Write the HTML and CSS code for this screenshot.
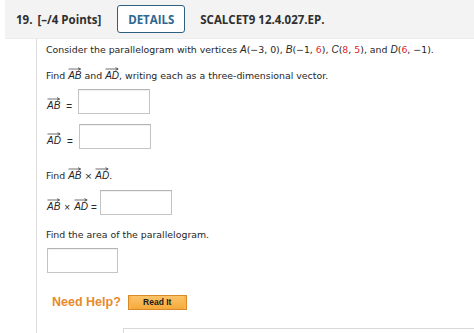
FILE: index.html
```html
<!DOCTYPE html>
<html>
<head>
<meta charset="utf-8">
<link rel="stylesheet" href="styles.css">
</head>
<body>
<div class="header">
  <span class="qnum">19.</span>
  <span class="points">[–/4 Points]</span>
  <span class="details">DETAILS</span>
  <span class="code">SCALCET9 12.4.027.EP.</span>
</div>
<div class="content">
  <p class="line first">Consider the parallelogram with vertices <i>A</i>(−3, 0), <i>B</i>(−1, <span class="red">6</span>), <i>C</i>(<span class="red">8</span>, <span class="red">5</span>), and <i>D</i>(<span class="red">6</span>, −1).</p>
  <p class="line l2">Find <span class="vec">AB<svg viewBox="0 0 14 5" preserveAspectRatio="none"><path d="M0.5 2.5H13M10.5 0.8L13.3 2.5L10.5 4.2" fill="none" stroke="#333" stroke-width="0.8"/></svg></span> and <span class="vec">AD<svg viewBox="0 0 14 5" preserveAspectRatio="none"><path d="M0.5 2.5H13M10.5 0.8L13.3 2.5L10.5 4.2" fill="none" stroke="#333" stroke-width="0.8"/></svg></span>, writing each as a three-dimensional vector.</p>
  <div class="row r1">
    <span class="vec">AB<svg viewBox="0 0 14 5" preserveAspectRatio="none"><path d="M0.5 2.5H13M10.5 0.8L13.3 2.5L10.5 4.2" fill="none" stroke="#333" stroke-width="0.8"/></svg></span><span class="eq">=</span><span class="box"></span>
  </div>
  <div class="row r2">
    <span class="vec">AD<svg viewBox="0 0 14 5" preserveAspectRatio="none"><path d="M0.5 2.5H13M10.5 0.8L13.3 2.5L10.5 4.2" fill="none" stroke="#333" stroke-width="0.8"/></svg></span><span class="eq">=</span><span class="box"></span>
  </div>
  <p class="line l3">Find <span class="vec">AB<svg viewBox="0 0 14 5" preserveAspectRatio="none"><path d="M0.5 2.5H13M10.5 0.8L13.3 2.5L10.5 4.2" fill="none" stroke="#333" stroke-width="0.8"/></svg></span> × <span class="vec">AD<svg viewBox="0 0 14 5" preserveAspectRatio="none"><path d="M0.5 2.5H13M10.5 0.8L13.3 2.5L10.5 4.2" fill="none" stroke="#333" stroke-width="0.8"/></svg></span>.</p>
  <div class="row r3">
    <span class="vec">AB<svg viewBox="0 0 14 5" preserveAspectRatio="none"><path d="M0.5 2.5H13M10.5 0.8L13.3 2.5L10.5 4.2" fill="none" stroke="#333" stroke-width="0.8"/></svg></span><span class="times">×</span><span class="vec">AD<svg viewBox="0 0 14 5" preserveAspectRatio="none"><path d="M0.5 2.5H13M10.5 0.8L13.3 2.5L10.5 4.2" fill="none" stroke="#333" stroke-width="0.8"/></svg></span><span class="eq eq3">=</span><span class="box"></span>
  </div>
  <p class="line l4">Find the area of the parallelogram.</p>
  <div class="row r4"><span class="box"></span></div>
  <div class="help">
    <span class="need">Need Help?</span>
    <span class="readit">Read It</span>
  </div>
  <div class="bottom"></div>
</div>
</body>
</html>
```

FILE: styles.css
```css
html, body {
  margin: 0;
  padding: 0;
  background: #fff;
  overflow: hidden;
}
body {
  width: 474px;
  height: 333px;
  color: #262626;
}
.header {
  margin-left: 5px;
  height: 39px;
  background: #f3f3f3;
  border-bottom: 1px solid #ececec;
  box-sizing: border-box;
  display: flex;
  align-items: center;
  padding-left: 11px;
  font-family: "Open Sans", sans-serif;
  font-weight: 700;
  font-size: 11.5px;
  color: #2f2f2f;
}
.points {
  margin-left: 5px;
}
.details {
  margin-left: 16px;
  width: 68px;
  height: 28px;
  box-sizing: border-box;
  border: 1.5px solid #2f5f7e;
  border-radius: 3px;
  background: #fff;
  color: #2d6890;
  display: flex;
  align-items: center;
  justify-content: center;
}
.code {
  margin-left: 15px;
}
.content {
  margin-left: 36px;
  border-left: 1px solid #dcdcdc;
  padding-left: 9px;
  padding-top: 4px;
  height: 290px;
  font-family: "DejaVu Sans", Verdana, sans-serif;
  font-size: 9.4px;
}
.line {
  margin: 0;
  line-height: 14px;
  white-space: nowrap;
}
.l2 { margin-top: 12px; }
.l3 { margin-top: 20px; }
.l4 { margin-top: 13px; }
i {
  font-family: "Liberation Sans", Arial, sans-serif;
  font-size: 10px;
}
.red { color: #e2272b; }
.vec {
  position: relative;
  display: inline-block;
  font-family: "Liberation Sans", Arial, sans-serif;
  font-style: italic;
  font-size: 10px;
  line-height: 10px;
}
.vec svg {
  position: absolute;
  left: 0;
  top: -4px;
  width: 100%;
  height: 4px;
  overflow: visible;
}
.row {
  display: flex;
  align-items: center;
  height: 25px;
}
.r1 { margin-top: 6px; }
.r2 { margin-top: 10px; }
.r3 { margin-top: 7px; }
.r4 { margin-top: 6px; }
.row .vec {
  margin-left: 1px;
  margin-top: 9px;
}
.eq {
  font-family: "Liberation Sans", Arial, sans-serif;
  font-size: 10px;
  margin-left: 6px;
  margin-right: 6px;
  margin-top: 9px;
}
.eq3 {
  margin-left: 3px;
  margin-right: 3px;
}
.times {
  font-family: "Liberation Sans", Arial, sans-serif;
  font-size: 10px;
  margin: 9px 3px 0 4px;
}
.box {
  display: block;
  width: 72px;
  height: 25px;
  box-sizing: border-box;
  border: 1px solid #c4c4c4;
  border-top-color: #b4b4b4;
  box-shadow: inset 0 1px 1px rgba(0,0,0,0.06);
  background: #fff;
}
.r4 .box {
  width: 71px;
  margin-left: 1px;
}
.help {
  display: flex;
  align-items: center;
  margin-top: 21px;
  margin-left: 6px;
  height: 16px;
}
.need {
  font-family: "Liberation Sans", Arial, sans-serif;
  font-weight: 700;
  font-size: 12.5px;
  color: #e88a2c;
}
.readit {
  margin-left: 7px;
  width: 59px;
  height: 15px;
  box-sizing: border-box;
  border: 1px solid #d78a2a;
  background: linear-gradient(#fbc46a, #f6a93a);
  box-shadow: inset 2px 0 0 #f9b450, inset -2px 0 0 #f9b450;
  font-family: "Liberation Sans", Arial, sans-serif;
  font-weight: 700;
  font-size: 8.5px;
  color: #1a1a1a;
  display: flex;
  align-items: center;
  justify-content: center;
}
.bottom {
  margin-top: 18px;
  margin-left: 77px;
  height: 6px;
  border: 1px solid #d8d8d8;
  border-right: none;
  border-bottom: none;
}
```
